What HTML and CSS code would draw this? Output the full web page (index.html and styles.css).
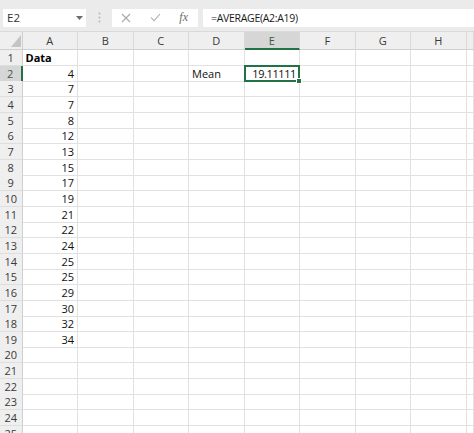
FILE: index.html
```html
<!DOCTYPE html>
<html>
<head>
<meta charset="utf-8">
<link rel="stylesheet" href="styles.css">
</head>
<body>
<div class="app">
  <div class="toolbar">
    <div class="namebox">
      <span class="ref">E2</span>
      <svg class="caret" width="7" height="4" viewBox="0 0 7 4"><polygon points="0,0 7,0 3.5,4" fill="#6b6b6b"/></svg>
    </div>
    <div class="grip">
      <svg width="3" height="11" viewBox="0 0 3 11"><circle cx="1.5" cy="1.5" r="1" fill="#b8b8b8"/><circle cx="1.5" cy="5.5" r="1" fill="#b8b8b8"/><circle cx="1.5" cy="9.5" r="1" fill="#b8b8b8"/></svg>
    </div>
    <div class="fxbox">
      <span class="fxbtn"><svg width="10" height="10" viewBox="0 0 10 10"><path d="M1 1 L9 9 M9 1 L1 9" stroke="#a9a9a9" stroke-width="1.1" fill="none"/></svg></span>
      <span class="fxbtn"><svg width="11" height="9" viewBox="0 0 11 9"><path d="M1 4.5 L4 7.8 L10 1" stroke="#a9a9a9" stroke-width="1.1" fill="none"/></svg></span>
      <span class="fxbtn fx">fx</span>
    </div>
    <div class="formula">=AVERAGE(A2:A19)</div>
  </div>
  <div class="sheet">
    <div class="row head">
      <div class="corner"><svg width="10" height="12" viewBox="0 0 10 12"><polygon points="10,0 10,12 0,12" fill="#c4c4c4"/></svg></div>
      <div class="ch">A</div><div class="ch">B</div><div class="ch">C</div><div class="ch">D</div><div class="ch sel">E</div><div class="ch">F</div><div class="ch">G</div><div class="ch">H</div><div class="ch"></div>
    </div>
    <div class="row"><div class="rh">1</div><div class="c b">Data</div><div class="c"></div><div class="c"></div><div class="c"></div><div class="c"></div><div class="c"></div><div class="c"></div><div class="c"></div><div class="c"></div></div>
    <div class="row"><div class="rh sel">2</div><div class="c n">4</div><div class="c"></div><div class="c"></div><div class="c">Mean</div><div class="c n active">19.11111</div><div class="c"></div><div class="c"></div><div class="c"></div><div class="c"></div></div>
    <div class="row"><div class="rh">3</div><div class="c n">7</div><div class="c"></div><div class="c"></div><div class="c"></div><div class="c"></div><div class="c"></div><div class="c"></div><div class="c"></div><div class="c"></div></div>
    <div class="row"><div class="rh">4</div><div class="c n">7</div><div class="c"></div><div class="c"></div><div class="c"></div><div class="c"></div><div class="c"></div><div class="c"></div><div class="c"></div><div class="c"></div></div>
    <div class="row"><div class="rh">5</div><div class="c n">8</div><div class="c"></div><div class="c"></div><div class="c"></div><div class="c"></div><div class="c"></div><div class="c"></div><div class="c"></div><div class="c"></div></div>
    <div class="row"><div class="rh">6</div><div class="c n">12</div><div class="c"></div><div class="c"></div><div class="c"></div><div class="c"></div><div class="c"></div><div class="c"></div><div class="c"></div><div class="c"></div></div>
    <div class="row"><div class="rh">7</div><div class="c n">13</div><div class="c"></div><div class="c"></div><div class="c"></div><div class="c"></div><div class="c"></div><div class="c"></div><div class="c"></div><div class="c"></div></div>
    <div class="row"><div class="rh">8</div><div class="c n">15</div><div class="c"></div><div class="c"></div><div class="c"></div><div class="c"></div><div class="c"></div><div class="c"></div><div class="c"></div><div class="c"></div></div>
    <div class="row"><div class="rh">9</div><div class="c n">17</div><div class="c"></div><div class="c"></div><div class="c"></div><div class="c"></div><div class="c"></div><div class="c"></div><div class="c"></div><div class="c"></div></div>
    <div class="row"><div class="rh">10</div><div class="c n">19</div><div class="c"></div><div class="c"></div><div class="c"></div><div class="c"></div><div class="c"></div><div class="c"></div><div class="c"></div><div class="c"></div></div>
    <div class="row"><div class="rh">11</div><div class="c n">21</div><div class="c"></div><div class="c"></div><div class="c"></div><div class="c"></div><div class="c"></div><div class="c"></div><div class="c"></div><div class="c"></div></div>
    <div class="row"><div class="rh">12</div><div class="c n">22</div><div class="c"></div><div class="c"></div><div class="c"></div><div class="c"></div><div class="c"></div><div class="c"></div><div class="c"></div><div class="c"></div></div>
    <div class="row"><div class="rh">13</div><div class="c n">24</div><div class="c"></div><div class="c"></div><div class="c"></div><div class="c"></div><div class="c"></div><div class="c"></div><div class="c"></div><div class="c"></div></div>
    <div class="row"><div class="rh">14</div><div class="c n">25</div><div class="c"></div><div class="c"></div><div class="c"></div><div class="c"></div><div class="c"></div><div class="c"></div><div class="c"></div><div class="c"></div></div>
    <div class="row"><div class="rh">15</div><div class="c n">25</div><div class="c"></div><div class="c"></div><div class="c"></div><div class="c"></div><div class="c"></div><div class="c"></div><div class="c"></div><div class="c"></div></div>
    <div class="row"><div class="rh">16</div><div class="c n">29</div><div class="c"></div><div class="c"></div><div class="c"></div><div class="c"></div><div class="c"></div><div class="c"></div><div class="c"></div><div class="c"></div></div>
    <div class="row"><div class="rh">17</div><div class="c n">30</div><div class="c"></div><div class="c"></div><div class="c"></div><div class="c"></div><div class="c"></div><div class="c"></div><div class="c"></div><div class="c"></div></div>
    <div class="row"><div class="rh">18</div><div class="c n">32</div><div class="c"></div><div class="c"></div><div class="c"></div><div class="c"></div><div class="c"></div><div class="c"></div><div class="c"></div><div class="c"></div></div>
    <div class="row"><div class="rh">19</div><div class="c n">34</div><div class="c"></div><div class="c"></div><div class="c"></div><div class="c"></div><div class="c"></div><div class="c"></div><div class="c"></div><div class="c"></div></div>
    <div class="row"><div class="rh">20</div><div class="c"></div><div class="c"></div><div class="c"></div><div class="c"></div><div class="c"></div><div class="c"></div><div class="c"></div><div class="c"></div><div class="c"></div></div>
    <div class="row"><div class="rh">21</div><div class="c"></div><div class="c"></div><div class="c"></div><div class="c"></div><div class="c"></div><div class="c"></div><div class="c"></div><div class="c"></div><div class="c"></div></div>
    <div class="row"><div class="rh">22</div><div class="c"></div><div class="c"></div><div class="c"></div><div class="c"></div><div class="c"></div><div class="c"></div><div class="c"></div><div class="c"></div><div class="c"></div></div>
    <div class="row"><div class="rh">23</div><div class="c"></div><div class="c"></div><div class="c"></div><div class="c"></div><div class="c"></div><div class="c"></div><div class="c"></div><div class="c"></div><div class="c"></div></div>
    <div class="row"><div class="rh">24</div><div class="c"></div><div class="c"></div><div class="c"></div><div class="c"></div><div class="c"></div><div class="c"></div><div class="c"></div><div class="c"></div><div class="c"></div></div>
    <div class="row"><div class="rh">25</div><div class="c"></div><div class="c"></div><div class="c"></div><div class="c"></div><div class="c"></div><div class="c"></div><div class="c"></div><div class="c"></div><div class="c"></div></div>
  </div>
</div>
</body>
</html>
```

FILE: styles.css
```css
html, body {
  margin: 0;
  padding: 0;
  background: #ffffff;
}
body {
  font-family: "Open Sans", "Liberation Sans", sans-serif;
  font-size: 11px;
  color: #222222;
  width: 474px;
  height: 433px;
  overflow: hidden;
}
.app {
  display: flex;
  flex-direction: column;
}
.toolbar {
  height: 32px;
  box-sizing: border-box;
  padding: 4px 0 0 3px;
  display: flex;
  align-items: center;
  background: #ebebeb;
  border-bottom: 1px solid #d9d9d9;
}
.namebox {
  width: 83px;
  height: 18px;
  background: #ffffff;
  display: flex;
  align-items: center;
  justify-content: space-between;
  padding: 0 3px 0 4px;
  box-sizing: border-box;
  font-size: 11.5px;
  color: #333;
}
.grip {
  width: 26px;
  display: flex;
  justify-content: center;
  align-items: center;
}
.fxbox {
  width: 86px;
  height: 18px;
  background: #ffffff;
  display: flex;
  align-items: center;
}
.fxbtn {
  flex: 1;
  display: flex;
  justify-content: center;
  align-items: center;
}
.fx {
  font-family: "Liberation Serif", serif;
  font-style: italic;
  font-size: 12px;
  color: #6a6a6a;
}
.formula {
  flex: 1;
  margin-left: 5px;
  height: 18px;
  background: #ffffff;
  display: flex;
  align-items: center;
  padding-left: 8px;
  font-size: 10.5px;
  letter-spacing: -0.3px;
  color: #1a1a1a;
}
.sheet {
  display: flex;
  flex-direction: column;
}
.row {
  display: grid;
  grid-template-columns: 22.5px repeat(8, 55.5px) 1fr;
  height: 15.67px;
}
.row.head {
  height: 18px;
}
.row > div {
  box-sizing: border-box;
  border-right: 1px solid #e1e1e1;
  border-bottom: 1px solid #e1e1e1;
  display: flex;
  align-items: center;
  overflow: visible;
  white-space: nowrap;
}
.corner {
  background: #efefef;
  justify-content: flex-end;
  align-items: flex-end !important;
  padding: 0 1px 2px 0;
  border-bottom: 1px solid #cfcfcf !important;
  border-right: 1px solid #cfcfcf !important;
}
.ch {
  background: #efefef;
  justify-content: center;
  color: #3a3a3a;
  font-size: 11px;
  border-right: 1px solid #d9d9d9 !important;
  border-bottom: 1px solid #cfcfcf !important;
}
.ch.sel {
  background: #d6d6d6;
  border-bottom: 2px solid #217346 !important;
  color: #3d5a48;
}
.rh {
  background: #efefef;
  justify-content: center;
  color: #3a3a3a;
  font-size: 11px;
  border-right: 1px solid #cfcfcf !important;
  border-bottom: 1px solid #dedede !important;
}
.rh.sel {
  background: #d6d6d6;
  border-right: 2px solid #217346 !important;
  color: #3d5a48;
}
.c {
  padding: 0 3px;
  color: #111111;
}
.c.n {
  justify-content: flex-end;
}
.c.b {
  font-weight: 700;
  color: #000;
}
.active {
  position: relative;
  letter-spacing: -0.4px;
}
.active::after {
  content: "";
  position: absolute;
  left: -1px;
  top: -1px;
  right: -1px;
  bottom: -1px;
  border: 2px solid #217346;
}
.active::before {
  content: "";
  position: absolute;
  right: -3px;
  bottom: -3px;
  width: 4px;
  height: 4px;
  background: #217346;
  border: 1px solid #ffffff;
  z-index: 2;
}
```
